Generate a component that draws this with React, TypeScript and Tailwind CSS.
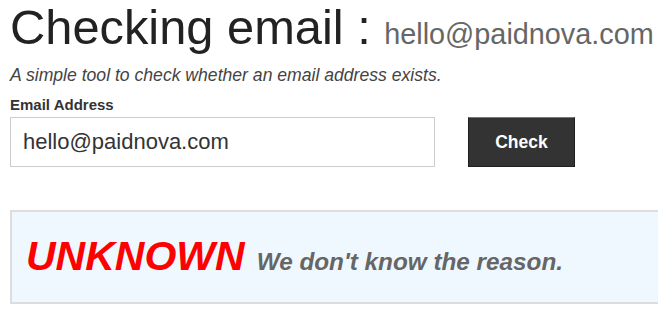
export default function App() {
  return (
    <div
      className="w-[658px] h-[309px] overflow-hidden bg-white px-[10px]"
      style={{ fontFamily: '"Liberation Sans", Arial, sans-serif' }}
    >
      {/* Title */}
      <h1 className="pt-[3px] text-[48.8px] leading-[48px] font-normal text-[#222] whitespace-nowrap">
        Checking email :{" "}
        <span className="text-[28.8px] text-[#666]">hello@paidnova.com</span>
      </h1>
      <p className="mt-[5px] text-[17.6px] leading-[24px] italic text-[#444]">
        A simple tool to check whether an email address exists.
      </p>

      {/* Form */}
      <form className="mt-[8px]" onSubmit={(e) => e.preventDefault()}>
        <label className="block text-[15px] leading-[20px] font-bold text-[#333]">
          Email Address
        </label>
        <div className="mt-[2px] flex items-start gap-[33px]">
          <input
            type="text"
            defaultValue="hello@paidnova.com"
            className="w-[425px] h-[50px] border border-[#ccc] bg-white px-[12px] text-[22px] text-[#333] outline-none"
          />
          <button
            type="submit"
            className="w-[107px] h-[50px] border border-[#1f1f1f] border-t-[#777] bg-[#333] text-[17.5px] font-bold text-white"
          >
            Check
          </button>
        </div>
      </form>

      {/* Result */}
      <div className="mt-[43px] w-[700px] h-[94px] border-2 border-[#ddd] bg-[#f0f8ff] pl-[14px] pt-[24px]">
        <div className="flex items-baseline whitespace-nowrap">
          <span className="text-[41px] leading-[40px] font-bold italic text-[#ff0000]">
            UNKNOWN
          </span>
          <span className="ml-[12px] text-[24.3px] font-bold italic text-[#666]">
            We don't know the reason.
          </span>
        </div>
      </div>
    </div>
  );
}
